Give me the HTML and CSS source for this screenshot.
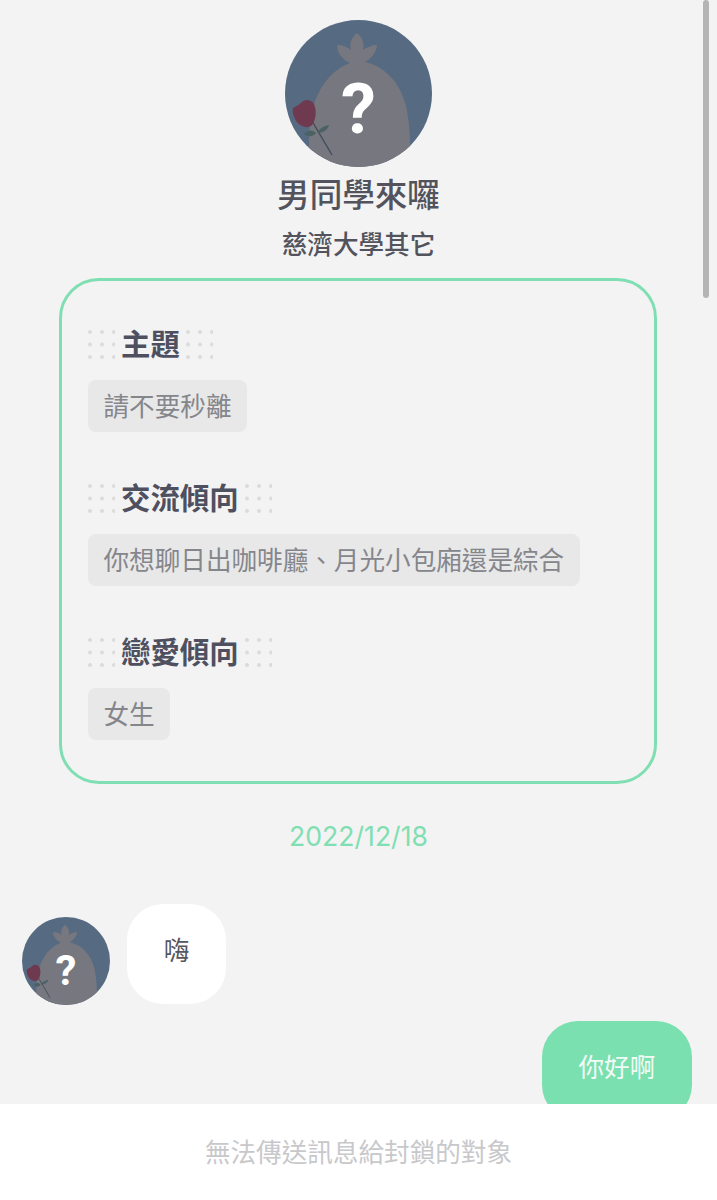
FILE: index.html
```html
<!DOCTYPE html>
<html lang="zh-Hant">
<head>
<meta charset="utf-8">
<title>聊天室</title>
<link rel="stylesheet" href="styles.css">
</head>
<body>
<svg class="defs" width="0" height="0" aria-hidden="true">
  <symbol id="avatar" viewBox="0 0 147 147">
    <clipPath id="avatar-clip"><circle cx="73.5" cy="73.5" r="73.5"/></clipPath>
    <g clip-path="url(#avatar-clip)">
      <rect width="147" height="147" fill="#566a82"/>
      <path fill="#77777f" d="M22 150C25 125 23 105 28 88C34 66 47 50 65 43C60 41 55 36 53 31C52 28 52 26 53 25C58 25 62 27 66 30C64 23 67 17 72 13C77 17 80 23 78 30C82 27 87 25 92 25C92 31 86 39 80 42C100 47 115 62 121 86C124 100 126 118 125 150Z"/>
      <path fill="none" stroke="#414c58" stroke-width="1.4" d="M27 101L47 135"/>
      <path fill="#4a6264" d="M32 113C34 109 38 106 44 105C43 110 38 113 32 113ZM31 113C27 109 23 110 19 114C23 117 28 117 31 113Z"/>
      <path fill="#6f3a50" d="M17 82C20 79 26 79 29 84C32 90 31 100 27 105C23 109 16 107 12 102C9 98 7 92 8 88C11 86 14 85 17 82Z"/>
    </g>
  </symbol>
</svg>

<main class="page">
  <section class="profile">
    <svg class="avatar-large" viewBox="0 0 147 147" role="img" aria-label="頭像"><use href="#avatar" width="147" height="147"/><text class="mark" x="73.5" y="113" text-anchor="middle">?</text></svg>
    <h1 class="name">男同學來囉</h1>
    <p class="school">慈濟大學其它</p>
  </section>

  <section class="card">
    <div class="group">
      <h2 class="heading"><span class="dots"></span>主題<span class="dots"></span></h2>
      <span class="tag">請不要秒離</span>
    </div>
    <div class="group">
      <h2 class="heading"><span class="dots"></span>交流傾向<span class="dots"></span></h2>
      <span class="tag">你想聊日出咖啡廳、月光小包廂還是綜合</span>
    </div>
    <div class="group">
      <h2 class="heading"><span class="dots"></span>戀愛傾向<span class="dots"></span></h2>
      <span class="tag">女生</span>
    </div>
  </section>

  <p class="date">2022/12/18</p>

  <div class="message incoming">
    <svg class="avatar-small" viewBox="0 0 147 147" role="img" aria-label="頭像"><use href="#avatar" width="147" height="147"/><text class="mark" x="73.5" y="113" text-anchor="middle">?</text></svg>
    <div class="bubble">嗨</div>
  </div>
  <div class="message outgoing">
    <div class="bubble">你好啊</div>
  </div>
</main>

<div class="scrollbar"></div>
<footer class="blocked">無法傳送訊息給封鎖的對象</footer>
</body>
</html>
```
FILE: styles.css
```css
* { box-sizing: border-box; }
html, body { margin: 0; height: 1200px; overflow: hidden; }
body {
  position: relative;
  background: #f3f3f3;
  font-family: Inter, "Noto Sans CJK TC", "Liberation Sans", sans-serif;
  color: #4e505e;
}
.defs { position: absolute; }
.mark { font: 700 70px Roboto, "Liberation Sans", sans-serif; fill: #fff; }
.page { display: flex; flex-direction: column; padding-top: 20px; }
.profile { display: flex; flex-direction: column; align-items: center; }
.avatar-large { width: 147px; height: 147px; display: block; }
.name { margin: 6px 0 0; font-size: 32.6px; line-height: 44px; font-weight: 500; color: #52535c; }
.school { margin: 10px 0 0; font-size: 25.6px; line-height: 36px; font-weight: 500; color: #52535c; }
.card {
  margin: 15px 60px 0 59px;
  height: 506px;
  border: 3px solid #80dfb2;
  border-radius: 40px;
  padding: 46px 26px 0;
  display: flex;
  flex-direction: column;
  gap: 48px;
}
.group { display: flex; flex-direction: column; align-items: flex-start; gap: 17px; height: 106px; }
.heading {
  margin: 0;
  display: flex;
  align-items: center;
  gap: 6px;
  height: 36px;
  font-size: 29.4px;
  line-height: 36px;
  font-weight: 700;
  color: #4e5060;
}
.dots {
  width: 27px;
  height: 30px;
  background: radial-gradient(circle at 2px 2px, #dcdcdc 1.8px, transparent 2.2px) 0 0 / 12px 12.5px;
}
.tag {
  padding: 0 15.5px;
  height: 52px;
  line-height: 54px;
  font-size: 25.6px;
  color: #85868c;
  background: #e8e8e8;
  border-radius: 8px;
  white-space: nowrap;
}
.date { margin: 34px 0 0; text-align: center; font-size: 26.6px; line-height: 36px; color: #80dfb2; }
.message { display: flex; }
.incoming { margin: 50px 0 0 22px; align-items: flex-end; gap: 17px; }
.avatar-small { width: 88px; height: 88px; display: block; margin-bottom: -1px; }
.bubble {
  height: 100px;
  padding: 29px 36.7px 0;
  font-size: 25.6px;
  line-height: 36px;
  border-radius: 36px;
}
.incoming .bubble { background: #fff; color: #55565e; }
.outgoing { margin: 17px 25px 0 0; justify-content: flex-end; }
.outgoing .bubble { background: #7be0af; color: #f1fbf6; }
.scrollbar {
  position: absolute;
  top: 0;
  left: 703px;
  width: 6px;
  height: 298px;
  border-radius: 3px;
  background: #b4b4b4;
}
.blocked {
  position: absolute;
  left: 0;
  right: 0;
  top: 1104px;
  height: 96px;
  background: #fff;
  text-align: center;
  font-size: 25.6px;
  line-height: 98px;
  color: #c8c8cb;
}
```
